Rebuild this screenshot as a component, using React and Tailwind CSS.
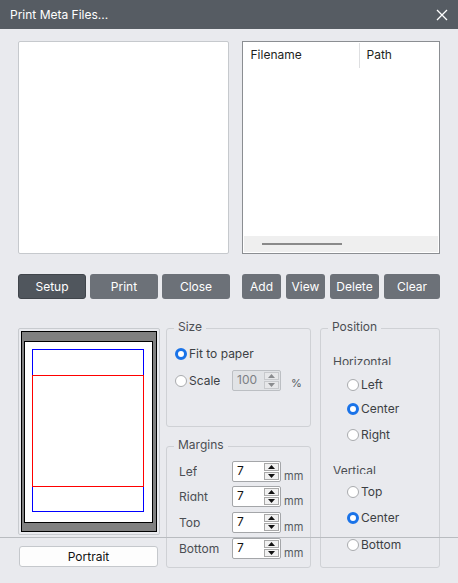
import React from "react";

function Radio({ checked }) {
  return checked ? (
    <div className="w-[12px] h-[12px] rounded-full border-[3.5px] border-[#1a73e8] bg-white shrink-0" />
  ) : (
    <div className="w-[12px] h-[12px] rounded-full border border-[#a9abae] bg-white shrink-0" />
  );
}

function Tri({ up, color }) {
  return (
    <svg width="7" height="4" viewBox="0 0 7 4">
      {up ? <polygon points="0,4 7,4 3.5,0" fill={color} /> : <polygon points="0,0 7,0 3.5,4" fill={color} />}
    </svg>
  );
}

function Spin({ value, disabled }) {
  return (
    <div
      className={
        "flex w-[49px] h-[21px] rounded-[2px] border " +
        (disabled ? "bg-[#e1e3e6] border-[#bcbfc3]" : "bg-white border-[#a4a6a9]")
      }
    >
      <div
        className={
          "flex-1 pl-[4px] text-[12px] leading-[18px] " + (disabled ? "text-[#7d8084]" : "text-[#111]")
        }
      >
        {value}
      </div>
      <div className="w-[17px] flex flex-col p-[1px] gap-[1px]">
        <div
          className={
            "flex-1 flex items-center justify-center border " +
            (disabled ? "border-[#c7c9cc] bg-[#e6e7e9]" : "border-[#a8a8a8] bg-[#f1f1f1]")
          }
        >
          <Tri up color={disabled ? "#8a8c8f" : "#111"} />
        </div>
        <div
          className={
            "flex-1 flex items-center justify-center border " +
            (disabled ? "border-[#c7c9cc] bg-[#e6e7e9]" : "border-[#a8a8a8] bg-[#f1f1f1]")
          }
        >
          <Tri color={disabled ? "#8a8c8f" : "#111"} />
        </div>
      </div>
    </div>
  );
}

function Group({ label, className, children }) {
  return (
    <div className={"relative border border-[#cfd1d5] rounded-[3px] " + className}>
      <span className="absolute -top-[9px] left-[7px] px-[4px] bg-[#e9eaee] text-[12px] leading-[14px] text-[#4b4e53]">
        {label}
      </span>
      {children}
    </div>
  );
}

function MarginRow({ label, mt, clipW }) {
  return (
    <div className={"flex h-[21px] " + mt}>
      <div className="w-[53px] shrink-0">
        <div
          className={"mt-[4px] h-[11px] overflow-hidden text-[12px] leading-[14px] text-[#4b4e53] " + (clipW || "")}
        >
          {label}
        </div>
      </div>
      <Spin value="7" />
      <span className="self-end ml-[3px] text-[11px] leading-[12px] text-[#555a60]">mm</span>
    </div>
  );
}

function Btn({ children, w, dark }) {
  return (
    <button
      className={
        "h-[25px] rounded-[3px] text-white text-[12px] flex items-center justify-center shrink-0 " +
        w +
        " " +
        (dark ? "bg-[#50565d] border border-[#40454b]" : "bg-[#6c7178]")
      }
    >
      {children}
    </button>
  );
}

export default function App() {
  return (
    <div className="relative w-[458px] h-[583px] bg-[#e9eaee] overflow-hidden font-['Inter','Noto_Sans',sans-serif] text-[#3c3f44]">
      {/* Title bar */}
      <div className="h-[29px] bg-[#565c63] flex items-center justify-between pl-[10px] pr-[9px]">
        <span className="text-white text-[12px] leading-[14px]">Print Meta Files...</span>
        <svg width="12" height="12" viewBox="0 0 12 12" className="mr-[1px]">
          <path d="M1 1 L11 11 M11 1 L1 11" stroke="white" strokeWidth="1.3" />
        </svg>
      </div>

      <div className="px-[18px] pt-[12px]">
        {/* top row */}
        <div className="flex gap-[13px]">
          <div className="w-[212px] h-[213px] bg-white border border-[#c6c9cd] rounded-[2px]" />
          <div className="w-[198px] h-[213px] bg-white border border-[#8b8e92] flex flex-col">
            <div className="flex h-[26px] pt-[1px]">
              <div className="w-[117px] border-r border-[#dedfe1] pl-[7px] text-[12px] leading-[24px] text-[#1d1f22]">
                Filename
              </div>
              <div className="pl-[6px] text-[12px] leading-[24px] text-[#1d1f22]">Path</div>
            </div>
            <div className="flex-1" />
            <div className="h-[16px] mx-[1px] mb-[1px] bg-[#efefef] flex items-center pl-[18px]">
              <div className="w-[80px] h-[2px] bg-[#8a8a8a]" />
            </div>
          </div>
        </div>

        {/* buttons */}
        <div className="flex mt-[20px]">
          <Btn w="w-[68px]" dark>Setup</Btn>
          <div className="ml-[4px]"><Btn w="w-[68px]">Print</Btn></div>
          <div className="ml-[4px]"><Btn w="w-[68px]">Close</Btn></div>
          <div className="ml-[12px]"><Btn w="w-[39px]">Add</Btn></div>
          <div className="ml-[5px]"><Btn w="w-[39px]">View</Btn></div>
          <div className="ml-[5px]"><Btn w="w-[49px]">Delete</Btn></div>
          <div className="ml-[5px]"><Btn w="w-[56px]">Clear</Btn></div>
        </div>

        {/* bottom section */}
        <div className="flex mt-[29px]">
          {/* preview column */}
          <div className="w-[142px] flex flex-col shrink-0">
            <div className="border border-[#c8cbcf] rounded-[2px] p-[2px]">
              <svg width="136" height="201" viewBox="0 0 136 201" className="block">
                <rect x="0.5" y="0.5" width="135" height="200" fill="#808080" stroke="#000" />
                <rect x="3.5" y="10.5" width="128" height="181" fill="#fff" stroke="#000" />
                <rect x="11.5" y="18.5" width="111" height="162" fill="none" stroke="#0000ff" />
                <rect x="11.5" y="44.5" width="111" height="111" fill="none" stroke="#ff0000" />
              </svg>
            </div>
            <button className="mt-[11px] ml-[1px] w-[139px] h-[21px] bg-[#fdfdfd] border border-[#c5c8cc] rounded-[3px] text-[12px] text-[#111] flex items-center justify-center">
              Portrait
            </button>
          </div>

          {/* middle column */}
          <div className="ml-[6px] w-[145px] flex flex-col shrink-0">
            <Group label="Size" className="h-[99px] pl-[8px] pt-[18px]">
              <div className="flex items-center h-[14px]">
                <Radio checked />
                <span className="ml-[2px] text-[12px] leading-[14px] text-[#3c3f44]">Fit to paper</span>
              </div>
              <div className="flex mt-[9px]">
                <div className="flex items-center h-[21px]">
                  <Radio />
                  <span className="ml-[2px] w-[43px] text-[12px] leading-[14px] text-[#3c3f44]">Scale</span>
                </div>
                <Spin value="100" disabled />
                <span className="ml-[10px] mt-[7px] text-[11px] leading-[12px] text-[#555a60]">%</span>
              </div>
            </Group>
            <Group label="Margins" className="mt-[19px] h-[122px] pl-[12px] pt-[14px]">
              <MarginRow label="Left" mt="" clipW="w-[18px]" />
              <MarginRow label="Right" mt="mt-[4px]" />
              <MarginRow label="Top" mt="mt-[5px]" />
              <MarginRow label="Bottom" mt="mt-[5px]" />
            </Group>
          </div>

          {/* position column */}
          <Group label="Position" className="ml-[9px] w-[120px] h-[240px] pl-[12px] pt-[26px] shrink-0">
            <div className="h-[10px] overflow-hidden text-[12px] leading-[14px] text-[#4b4e53]">Horizontal</div>
            <div className="ml-[14px] flex flex-col">
              <div className="flex items-center h-[14px] mt-[13px]">
                <Radio />
                <span className="ml-[2px] text-[12px] leading-[14px]">Left</span>
              </div>
              <div className="flex items-center h-[14px] mt-[10px]">
                <Radio checked />
                <span className="ml-[2px] text-[12px] leading-[14px]">Center</span>
              </div>
              <div className="flex items-center h-[14px] mt-[12px]">
                <Radio />
                <span className="ml-[2px] text-[12px] leading-[14px]">Right</span>
              </div>
            </div>
            <div className="mt-[22px] h-[10px] overflow-hidden text-[12px] leading-[14px] text-[#4b4e53]">Vertical</div>
            <div className="ml-[14px] flex flex-col">
              <div className="flex items-center h-[14px] mt-[11px]">
                <Radio />
                <span className="ml-[2px] text-[12px] leading-[14px]">Top</span>
              </div>
              <div className="flex items-center h-[14px] mt-[12px]">
                <Radio checked />
                <span className="ml-[2px] text-[12px] leading-[14px]">Center</span>
              </div>
              <div className="flex items-center h-[14px] mt-[13px]">
                <Radio />
                <span className="ml-[2px] text-[12px] leading-[14px]">Bottom</span>
              </div>
            </div>
          </Group>
        </div>
      </div>

      {/* stray divider line over content */}
      <div className="absolute left-0 right-0 top-[537px] h-[1px] bg-[#b9bcc0]" />
    </div>
  );
}
